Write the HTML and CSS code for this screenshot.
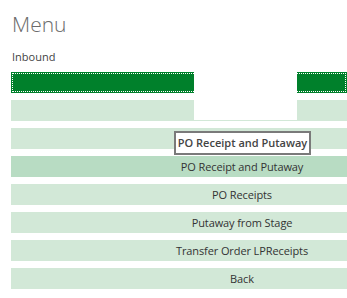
FILE: index.html
```html
<!DOCTYPE html>
<html lang="en">
  <head>
    <meta charset="UTF-8" />
    <title>Menu</title>
    <link rel="stylesheet" href="styles.css">
  </head>
  <body>
    <div class="page">
      <h1 class="title">Menu</h1>
      <div class="section">Inbound</div>
      <div class="menu">
        <div class="item active"></div>
        <div class="item"></div>
        <div class="item"></div>
        <div class="item hover">PO Receipt and Putaway</div>
        <div class="item">PO Receipts</div>
        <div class="item">Putaway from Stage</div>
        <div class="item">Transfer Order LPReceipts</div>
        <div class="item">Back</div>
      </div>
      <div class="blank"></div>
      <div class="tooltip">PO Receipt and Putaway</div>
    </div>
  </body>
</html>
```

FILE: styles.css
```css
body {
  margin: 0;
  font-family: "Open Sans", "Noto Sans", sans-serif;
  background: #fff;
}
.page {
  position: relative;
  height: 298px;
  padding: 0 0 0 11px;
  overflow: hidden;
}
.title {
  margin: 0;
  padding: 10px 0 0 1px;
  font-size: 21px;
  font-weight: 300;
  color: #6b6b6b;
  line-height: 28px;
}
.section {
  margin-top: 12px;
  padding-left: 1px;
  font-size: 11px;
  color: #444;
  line-height: 14px;
}
.menu {
  display: flex;
  flex-direction: column;
  gap: 7px;
  margin-top: 8px;
}
.item {
  height: 21px;
  padding-left: 126px;
  background: #d2e8d7;
  font-size: 11px;
  letter-spacing: -0.1px;
  line-height: 21px;
  text-align: center;
  color: #333;
}
.item.active {
  background: #00802b;
  outline: 1px dotted #fff;
  outline-offset: -2px;
}
.item.hover {
  background: #b8dcc3;
}
.blank {
  position: absolute;
  left: 194px;
  top: 72px;
  width: 103px;
  height: 48px;
  background: #fff;
}
.tooltip {
  position: absolute;
  left: 174px;
  top: 131px;
  width: 133px;
  height: 20px;
  border: 2px solid #7a7a7a;
  background: #fff;
  font-size: 11px;
  font-weight: 600;
  color: #444;
  line-height: 20px;
  text-align: center;
}
```
